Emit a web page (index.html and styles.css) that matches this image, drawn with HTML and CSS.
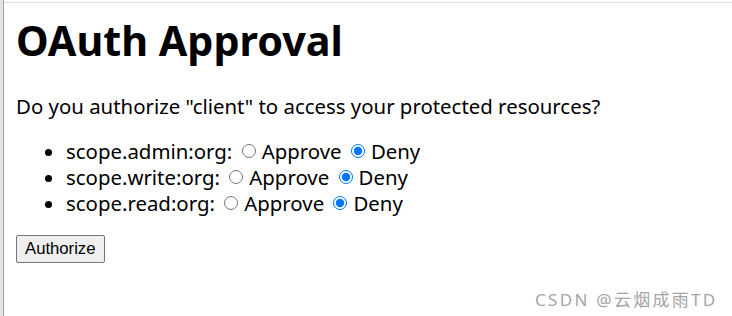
FILE: index.html
```html
<!DOCTYPE html>
<html>
<head>
<meta charset="utf-8">
<link rel="stylesheet" href="styles.css">
</head>
<body>
<div class="shell">
  <div class="strip"></div>
  <div class="window">
    <div class="content">
      <h1 class="title">OAuth Approval</h1>
      <p class="question">Do you authorize "client" to access your protected resources?</p>
      <form class="form">
        <ul class="scopes">
          <li class="scope">scope.admin:org: <label class="opt"><input type="radio" name="s1" class="radio">Approve</label> <label class="opt"><input type="radio" name="s1" class="radio" checked>Deny</label></li>
          <li class="scope">scope.write:org: <label class="opt"><input type="radio" name="s2" class="radio">Approve</label> <label class="opt"><input type="radio" name="s2" class="radio" checked>Deny</label></li>
          <li class="scope">scope.read:org: <label class="opt"><input type="radio" name="s3" class="radio">Approve</label> <label class="opt"><input type="radio" name="s3" class="radio" checked>Deny</label></li>
        </ul>
        <button type="button" class="btn">Authorize</button>
      </form>
    </div>
  </div>
</div>
<div class="watermark">CSDN @云烟成雨TD</div>
</body>
</html>
```
FILE: styles.css
```css
html, body {
  margin: 0;
  padding: 0;
  background: #ffffff;
}
body {
  font-family: "Noto Sans", "Noto Sans CJK SC", sans-serif;
  color: #000;
  overflow: hidden;
}
.shell {
  display: flex;
  height: 316px;
}
.strip {
  width: 3px;
  background: #e4e4e4;
}
.window {
  flex: 1;
  border-left: 1px solid #a3a3a3;
  padding-top: 2px;
}
.content {
  border-top: 1px solid #dcdcdc;
  height: 100%;
  padding-left: 12px;
}
.title {
  font-size: 41.3px;
  font-weight: bold;
  margin: 11px 0 0 0;
  line-height: 52px;
}
.question {
  font-size: 20.4px;
  margin: 27px 0 0 0;
  line-height: 26px;
}
.form {
  margin: 0;
}
.scopes {
  font-size: 20.4px;
  line-height: 26px;
  margin: 19px 0 0 0;
  padding-left: 50px;
}
.radio {
  width: 14px;
  height: 14px;
  margin: 0 6px 0 4px;
  vertical-align: 1px;
}
.btn {
  font-family: "Liberation Sans", Arial, sans-serif;
  font-size: 16.7px;
  margin-top: 19px;
  padding: 3px 8px;
  background: #efefef;
  border: 1px solid #767676;
  border-radius: 2px;
  color: #000;
}
.watermark {
  position: absolute;
  left: 535px;
  top: 286px;
  font-family: "Noto Sans", "Noto Sans CJK SC", sans-serif;
  font-size: 17px;
  letter-spacing: 2.3px;
  color: #a5a5a5;
}
```
